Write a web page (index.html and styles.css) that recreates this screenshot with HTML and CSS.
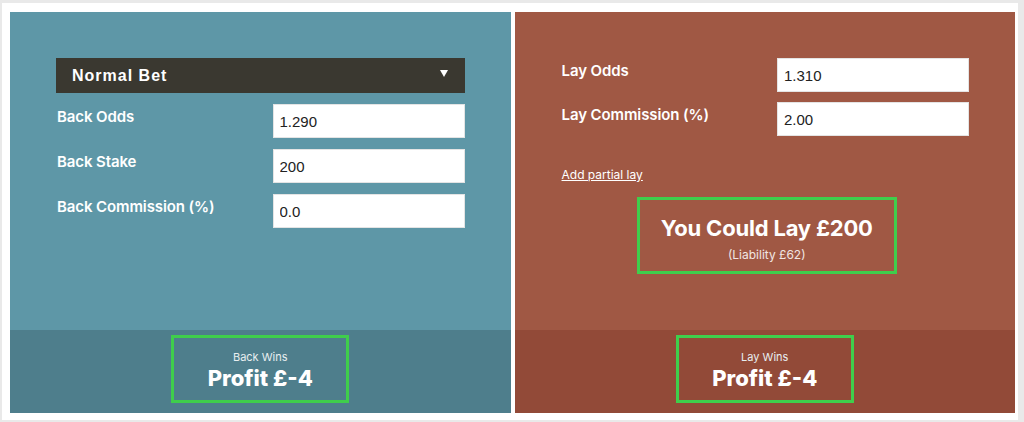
FILE: index.html
```html
<!DOCTYPE html>
<html>
	<head>
		<meta charset="UTF-8">
		<title>Matched Betting Calculator</title>
		<link rel="stylesheet" href="styles.css">
	</head>
	<body>
		<div class="frame">
			<div class="calc">
				<!-- back side -->
				<div class="side back">
					<div class="side-body">
						<div class="select">Normal Bet<span class="caret"></span></div>
						<div class="fields">
							<div class="field"><label>Back Odds</label><input type="text" value="1.290"></div>
							<div class="field"><label>Back Stake</label><input type="text" value="200"></div>
							<div class="field"><label>Back Commission (%)</label><input type="text" value="0.0"></div>
						</div>
					</div>
					<div class="side-foot">
						<div class="result">
							<span class="result-title">Back Wins</span>
							<span class="result-value">Profit £-4</span>
						</div>
					</div>
				</div>

				<!-- lay side -->
				<div class="side lay">
					<div class="side-body">
						<div class="fields lay-fields">
							<div class="field"><label>Lay Odds</label><input type="text" value="1.310"></div>
							<div class="field"><label>Lay Commission (%)</label><input type="text" value="2.00"></div>
						</div>
						<a class="partial" href="#">Add partial lay</a>
						<div class="lay-box">
							<span class="lay-amount">You Could Lay £200</span>
							<span class="liability">(Liability £62)</span>
						</div>
					</div>
					<div class="side-foot">
						<div class="result">
							<span class="result-title">Lay Wins</span>
							<span class="result-value">Profit £-4</span>
						</div>
					</div>
				</div>
			</div>
		</div>
	</body>
</html>
```

FILE: styles.css
```css
*{
	margin: 0;
	padding: 0;
	box-sizing: border-box;
}
body{
	background: #fff;
	font-family: Inter, "Open Sans", sans-serif;
	color: #fff;
}
.frame{
	width: 1024px;
	height: 422px;
	border: 2px solid #e9e9e9;
	border-top-width: 3px;
	border-right-width: 6px;
	padding: 9px 3px 7px 8px;
}
.calc{
	display: flex;
	gap: 4px;
	height: 100%;
}
.side{
	flex: 1;
	display: flex;
	flex-direction: column;
}
.back{
	background: #5e97a7;
}
.lay{
	background: #a05844;
}
.side-body{
	flex: 1;
	padding: 46px 46px 0 46px;
}
.side-foot{
	height: 83px;
	display: flex;
	justify-content: center;
	align-items: center;
	padding-bottom: 6px;
}
.back .side-foot{
	background: #4e7e8c;
}
.lay .side-foot{
	background: #924a38;
}

/* bet type dropdown */
.select{
	height: 35px;
	background: #3a3830;
	display: flex;
	align-items: center;
	justify-content: space-between;
	padding: 0 17px 0 16px;
	font-family: "Liberation Sans", Arial, sans-serif;
	font-weight: bold;
	font-size: 16px;
	letter-spacing: 1px;
	margin-bottom: 11px;
}
.caret{
	width: 0;
	height: 0;
	border-left: 4px solid transparent;
	border-right: 4px solid transparent;
	border-top: 7px solid #fff;
	margin-top: -4px;
}

.fields{
	display: flex;
	flex-direction: column;
	gap: 11px;
}
.lay-fields{
	gap: 10px;
}
.field{
	display: flex;
	justify-content: space-between;
	align-items: flex-start;
}
.field label{
	font-size: 15px;
	font-weight: 600;
	line-height: 18px;
	letter-spacing: -0.1px;
	padding-top: 4px;
	padding-left: 1px;
}
.field input{
	width: 192px;
	height: 34px;
	border: 1px solid #e4e4e4;
	background: #fff;
	padding: 0 6px;
	font-family: "Liberation Sans", Arial, sans-serif;
	font-size: 15px;
	color: #222;
	outline: none;
}

.partial{
	display: inline-block;
	margin-top: 31px;
	margin-left: 1px;
	font-size: 12px;
	color: #fff;
	text-decoration: underline;
}

.lay-box{
	width: 260px;
	height: 77px;
	margin: 14px 0 0 calc(50% - 128px);
	border: 3px solid #3fce4c;
	display: flex;
	flex-direction: column;
	align-items: center;
	padding-top: 15px;
}
.lay-amount{
	font-size: 22px;
	font-weight: 700;
	letter-spacing: -0.2px;
}
.liability{
	font-size: 12px;
	margin-top: 6px;
	color: #f1e6e2;
}

.result{
	width: 178px;
	height: 68px;
	border: 3px solid #3fce4c;
	display: flex;
	flex-direction: column;
	align-items: center;
	padding-top: 12px;
}
.result-title{
	font-size: 11px;
	color: #e8eef0;
}
.result-value{
	font-size: 22px;
	font-weight: 800;
	margin-top: 1px;
}
```
